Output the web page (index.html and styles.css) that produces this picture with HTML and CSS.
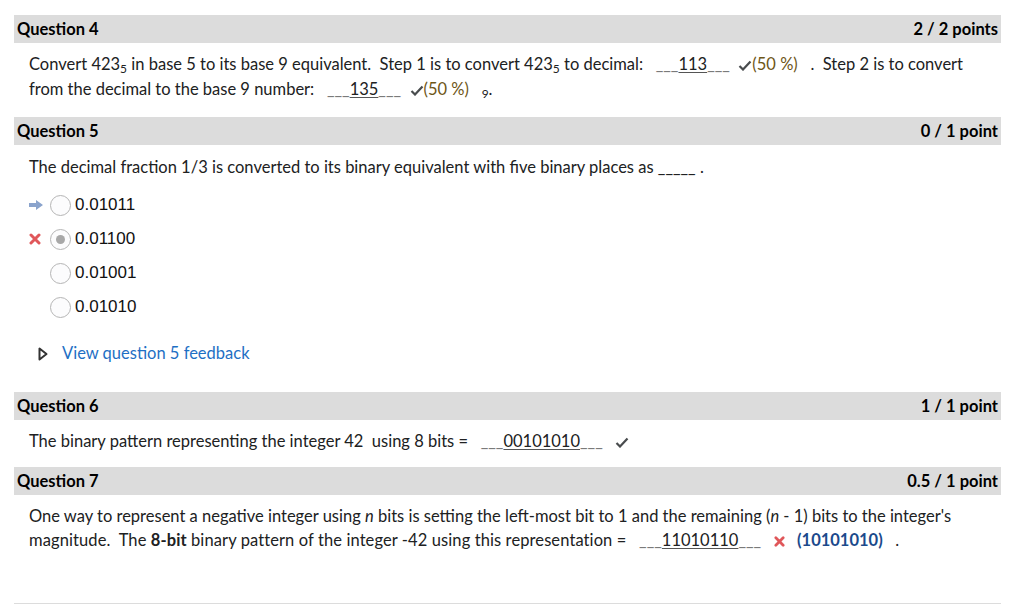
FILE: index.html
```html
<!DOCTYPE html>
<html lang="en">
<head>
    <meta charset="UTF-8">
    <title>Quiz results</title>
    <link rel="stylesheet" href="styles.css">
</head>
<body>
    <div class="quiz">
        <div class="question q4">
            <div class="q-head">
                <span>Question 4</span>
                <span>2 / 2 points</span>
            </div>
            <div class="q-body">
                <p class="q-text">Convert 423<sub>5</sub> in base 5 to its base 9 equivalent.&nbsp; Step 1 is to convert 423<sub>5</sub> to decimal: &nbsp; <span class="blank"><span class="dash">___</span><span class="ans">113</span><span class="dash">___</span></span>&nbsp; <svg class="check" width="14" height="11" viewBox="0 0 14 11"><path d="M1.5 6l3.5 3.5 7.5-8" fill="none" stroke="#494c4e" stroke-width="2.2"/></svg><span class="partial">(50 %)</span> &nbsp; . &nbsp;Step 2 is to convert from the decimal to the base 9 number: &nbsp; <span class="blank"><span class="dash">___</span><span class="ans">135</span><span class="dash">___</span></span>&nbsp; <svg class="check" width="14" height="11" viewBox="0 0 14 11"><path d="M1.5 6l3.5 3.5 7.5-8" fill="none" stroke="#494c4e" stroke-width="2.2"/></svg><span class="partial">(50 %)</span> &nbsp; <sub>9</sub>.</p>
            </div>
        </div>

        <div class="question q5">
            <div class="q-head">
                <span>Question 5</span>
                <span>0 / 1 point</span>
            </div>
            <div class="q-body">
                <p class="q-text">The decimal fraction 1/3 is converted to its binary equivalent with five binary places as _____ .</p>
                <ul class="options">
                    <li class="option">
                        <span class="mark">
                            <svg width="14" height="10" viewBox="0 0 14 10"><path d="M0 3h7V0l7 5-7 5V7H0z" fill="#8aa3cc"/></svg>
                        </span>
                        <span class="radio"></span>
                        <span class="opt-text">0.01011</span>
                    </li>
                    <li class="option">
                        <span class="mark">
                            <svg width="12" height="12" viewBox="0 0 12 12"><path d="M2 2l8 8M10 2l-8 8" stroke="#e0575a" stroke-width="3" stroke-linecap="round"/></svg>
                        </span>
                        <span class="radio selected"></span>
                        <span class="opt-text">0.01100</span>
                    </li>
                    <li class="option">
                        <span class="mark"></span>
                        <span class="radio"></span>
                        <span class="opt-text">0.01001</span>
                    </li>
                    <li class="option">
                        <span class="mark"></span>
                        <span class="radio"></span>
                        <span class="opt-text">0.01010</span>
                    </li>
                </ul>
                <div class="feedback">
                    <svg width="10" height="14" viewBox="0 0 10 14"><path d="M1.5 1.5v11l7-5.5z" fill="none" stroke="#333" stroke-width="2" stroke-linejoin="round"/></svg>
                    <a class="feedback-link">View question 5 feedback</a>
                </div>
            </div>
        </div>

        <div class="question q6">
            <div class="q-head">
                <span>Question 6</span>
                <span>1 / 1 point</span>
            </div>
            <div class="q-body">
                <p class="q-text">The binary pattern representing the integer 42&nbsp; using 8 bits = &nbsp; <span class="blank"><span class="dash">___</span><span class="ans">00101010</span><span class="dash">___</span></span>&nbsp;&nbsp; <svg class="check" width="14" height="11" viewBox="0 0 14 11"><path d="M1.5 6l3.5 3.5 7.5-8" fill="none" stroke="#494c4e" stroke-width="2.2"/></svg></p>
            </div>
        </div>

        <div class="question q7">
            <div class="q-head">
                <span>Question 7</span>
                <span>0.5 / 1 point</span>
            </div>
            <div class="q-body">
                <p class="q-text">One way to represent a negative integer using <i>n</i> bits is setting the left-most bit to 1 and the remaining (<i>n</i> - 1) bits to the integer's <span class="line-two">magnitude.&nbsp; The <b>8-bit</b> binary pattern of the integer -42 using this representation =</span> &nbsp; <span class="blank"><span class="dash">___</span><span class="ans">11010110</span><span class="dash">___</span></span>&nbsp; <svg class="cross" width="11" height="11" viewBox="0 0 12 12"><path d="M2 2l8 8M10 2l-8 8" stroke="#e0575a" stroke-width="3" stroke-linecap="round"/></svg> &nbsp;<b class="correct">(10101010)</b> &nbsp; .</p>
            </div>
        </div>

        <div class="bottom-rule"></div>
    </div>
</body>
</html>
```

FILE: styles.css
```css
* {
    box-sizing: border-box;
    margin: 0;
    padding: 0;
}

body {
    font-family: Lato, "Open Sans", sans-serif;
    font-size: 16.5px;
    color: #202122;
    background: #fff;
    padding: 15px 23px 0 14px;
}

.q-head {
    display: flex;
    justify-content: space-between;
    align-items: center;
    height: 28px;
    padding: 0 3px;
    background: #dcdcdc;
    font-weight: 700;
    font-size: 16.5px;
    color: #000;
}

.q-body {
    padding-left: 15px;
}

.q-text {
    line-height: 25px;
    padding-top: 9px;
}

sub {
    font-size: 12px;
    vertical-align: -3px;
    line-height: 1;
}

.blank .dash {
    color: #7a7a7a;
}

.blank .ans {
    text-decoration: underline;
    text-decoration-color: #555;
    text-underline-offset: 2px;
}

.check {
    vertical-align: -1px;
}

.partial {
    color: #6e5617;
}

.q4 .q-text {
    padding-right: 30px;
}

.q5 {
    margin-top: 15px;
}

.q5 .q-text {
    padding-top: 10px;
}

.options {
    list-style: none;
    padding-top: 8px;
}

.option {
    display: flex;
    align-items: center;
    height: 34px;
    font-family: "Liberation Sans", Arial, sans-serif;
    font-size: 17px;
    color: #111;
}

.mark {
    width: 21px;
    display: flex;
    align-items: center;
}

.radio {
    width: 21px;
    height: 21px;
    border: 1px solid #b5b5b5;
    border-radius: 50%;
    background: #fcfcfd;
    margin-right: 4px;
    display: flex;
    align-items: center;
    justify-content: center;
}

.radio.selected::after {
    content: "";
    width: 9px;
    height: 9px;
    border-radius: 50%;
    background: #a8a8a8;
}

.feedback {
    display: flex;
    align-items: center;
    gap: 14px;
    padding-top: 17px;
    padding-left: 9px;
    line-height: 25px;
}

.feedback-link {
    color: #1e6fc4;
}

.q6 {
    margin-top: 26px;
}

.q7 {
    margin-top: 13px;
}

.q7 .q-text {
    line-height: 24px;
    padding-top: 9px;
    padding-right: 30px;
}

.line-two {
    letter-spacing: 0.1px;
}

.cross {
    vertical-align: -1px;
    margin-left: 4px;
}

.correct {
    color: #1b4a8c;
    margin-left: 4px;
}

.bottom-rule {
    margin-top: 51px;
    border-top: 1px solid #dcdcdc;
}
```
